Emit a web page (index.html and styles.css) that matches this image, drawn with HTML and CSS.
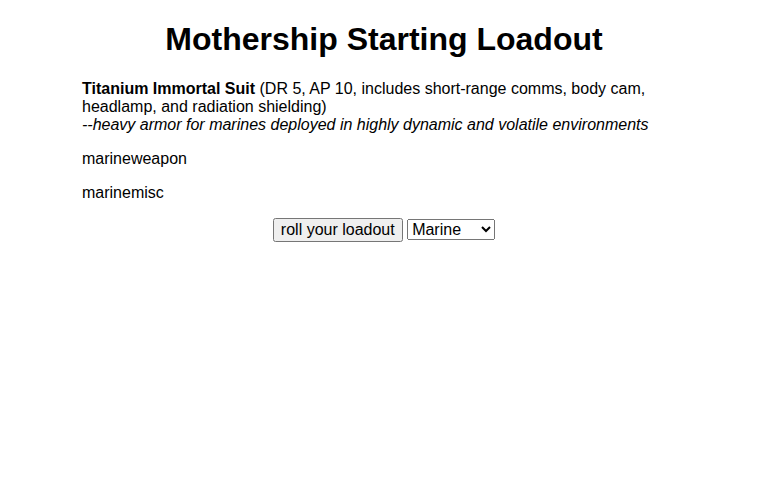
FILE: index.html
```html
<!DOCTYPE html>
<html>
<head>
<meta charset="utf-8">
<title>Mothership Starting Loadout</title>
<link rel="stylesheet" href="styles.css">
</head>
<body>
<h1 class="title">Mothership Starting Loadout</h1>
<div class="loadout">
  <p class="item"><b>Titanium Immortal Suit</b> (DR 5, AP 10, includes short-range comms, body cam, headlamp, and radiation shielding)<br><i>--heavy armor for marines deployed in highly dynamic and volatile environments</i></p>
  <p class="item">marineweapon</p>
  <p class="item">marinemisc</p>
  <p class="controls"><button class="roll">roll your loadout</button> <select class="class-select"><option>Marine</option><option>Android</option><option>Scientist</option><option>Teamster</option></select></p>
</div>
</body>
</html>
```

FILE: styles.css
```css
body {
  font-family: "Liberation Sans", Arial, sans-serif;
  font-size: 16px;
  color: #000;
  background: #fff;
}
.title {
  text-align: center;
  font-size: 32px;
  margin: 13.44px 0 21.44px;
}
.loadout {
  width: 604px;
  margin: 0 auto;
}
.controls {
  text-align: center;
}
.roll,
.class-select {
  font-family: "Liberation Sans", Arial, sans-serif;
  font-size: 16px;
}
```
